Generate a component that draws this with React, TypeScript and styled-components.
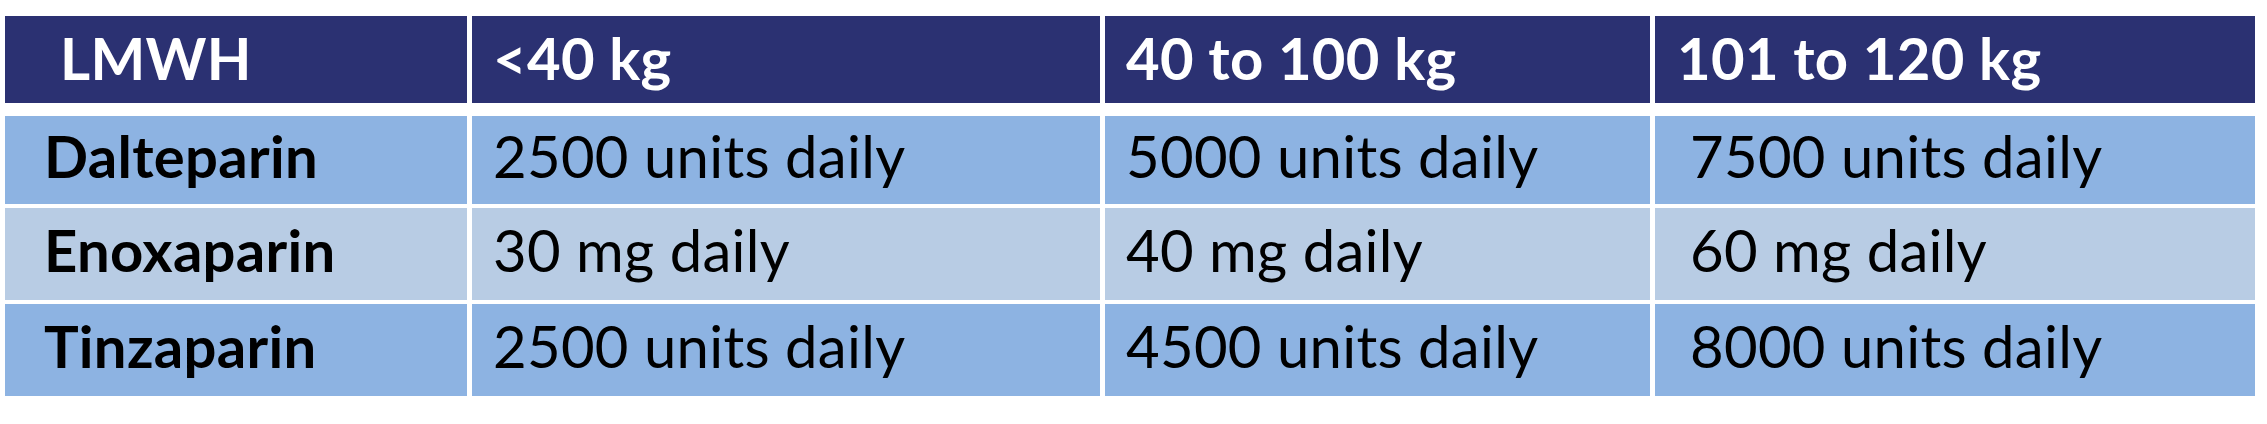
import styled, { createGlobalStyle } from 'styled-components';

const GlobalStyle = createGlobalStyle`
  html, body {
    margin: 0;
    padding: 0;
    background: #ffffff;
  }
  body {
    font-family: Lato, "Open Sans", "Liberation Sans", sans-serif;
  }
`;

const COLUMNS = '462px 628px 545px 600px';

const Page = styled.div`
  width: 2267px;
  height: 424px;
  padding: 16px 0 0 5px;
  box-sizing: border-box;
  background: #ffffff;
`;

const Table = styled.div`
  display: flex;
  flex-direction: column;
  width: 2250px;
`;

const Body = styled.div`
  display: flex;
  flex-direction: column;
  gap: 4px;
  margin-top: 13px;
`;

const Row = styled.div<{ $height: number }>`
  display: grid;
  grid-template-columns: ${COLUMNS};
  column-gap: 5px;
  height: ${(p) => p.$height}px;
`;

type Tone = 'head' | 'dark' | 'light';

const toneBg: Record<Tone, string> = {
  head: '#2b3172',
  dark: '#8db3e2',
  light: '#b8cce4',
};

const Cell = styled.div<{ $tone: Tone; $bold?: boolean; $indent: number }>`
  display: flex;
  align-items: center;
  padding-left: ${(p) => p.$indent}px;
  padding-bottom: ${(p) => (p.$tone === 'head' ? 4 : 8)}px;
  box-sizing: border-box;
  background: ${(p) => toneBg[p.$tone]};
  color: ${(p) => (p.$tone === 'head' ? '#ffffff' : '#000000')};
  font-size: 58px;
  font-weight: ${(p) => (p.$bold ? 700 : 400)};
  line-height: 1;
  white-space: nowrap;
  letter-spacing: 0.3px;
`;

const headers = ['LMWH', '<40 kg', '40 to 100 kg', '101 to 120 kg'];
const headIndent = [55, 21, 21, 22];
const bodyIndent = [39, 21, 21, 35];

const rows: { name: string; doses: string[]; tone: Tone; height: number }[] = [
  { name: 'Dalteparin', doses: ['2500 units daily', '5000 units daily', '7500 units daily'], tone: 'dark', height: 88 },
  { name: 'Enoxaparin', doses: ['30 mg daily', '40 mg daily', '60 mg daily'], tone: 'light', height: 92 },
  { name: 'Tinzaparin', doses: ['2500 units daily', '4500 units daily', '8000 units daily'], tone: 'dark', height: 92 },
];

const App = () => {
  return (
    <>
      <GlobalStyle />
      <Page>
        <Table>
          <Row $height={87}>
            {headers.map((h, i) => (
              <Cell key={h} $tone="head" $bold $indent={headIndent[i]}>
                {h}
              </Cell>
            ))}
          </Row>
          <Body>
            {rows.map((r) => (
              <Row key={r.name} $height={r.height}>
                <Cell $tone={r.tone} $bold $indent={bodyIndent[0]}>
                  {r.name}
                </Cell>
                {r.doses.map((d, i) => (
                  <Cell key={i} $tone={r.tone} $indent={bodyIndent[i + 1]}>
                    {d}
                  </Cell>
                ))}
              </Row>
            ))}
          </Body>
        </Table>
      </Page>
    </>
  );
};

export default App;
